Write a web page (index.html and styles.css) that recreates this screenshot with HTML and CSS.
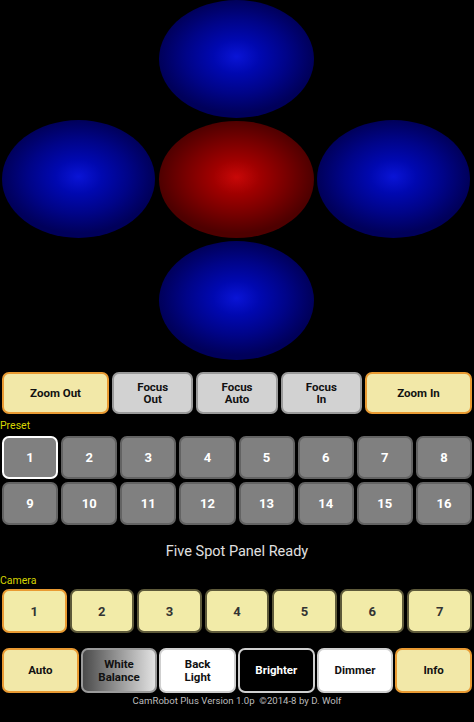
FILE: index.html
```html
<!DOCTYPE html>
<html>
<head>
<meta charset="utf-8">
<link rel="stylesheet" href="styles.css">
</head>
<body>
<div class="app">
  <div class="pad">
    <div class="spot blue top"></div>
    <div class="spot blue left"></div>
    <div class="spot red center"></div>
    <div class="spot blue right"></div>
    <div class="spot blue bottom"></div>
  </div>

  <div class="lens-row">
    <div class="btn yellow w4">Zoom Out</div>
    <div class="btn grey w3">Focus<br>Out</div>
    <div class="btn grey w3">Focus<br>Auto</div>
    <div class="btn grey w3">Focus<br>In</div>
    <div class="btn yellow w4">Zoom In</div>
  </div>

  <div class="label">Preset</div>
  <div class="preset-grid">
    <div class="btn preset sel">1</div>
    <div class="btn preset">2</div>
    <div class="btn preset">3</div>
    <div class="btn preset">4</div>
    <div class="btn preset">5</div>
    <div class="btn preset">6</div>
    <div class="btn preset">7</div>
    <div class="btn preset">8</div>
    <div class="btn preset">9</div>
    <div class="btn preset">10</div>
    <div class="btn preset">11</div>
    <div class="btn preset">12</div>
    <div class="btn preset">13</div>
    <div class="btn preset">14</div>
    <div class="btn preset">15</div>
    <div class="btn preset">16</div>
  </div>

  <div class="status">Five Spot Panel Ready</div>

  <div class="label cam-label">Camera</div>
  <div class="camera-grid">
    <div class="btn cam sel">1</div>
    <div class="btn cam">2</div>
    <div class="btn cam">3</div>
    <div class="btn cam">4</div>
    <div class="btn cam">5</div>
    <div class="btn cam">6</div>
    <div class="btn cam">7</div>
  </div>

  <div class="image-grid">
    <div class="btn yellow">Auto</div>
    <div class="btn wb">White<br>Balance</div>
    <div class="btn white">Back<br>Light</div>
    <div class="btn black">Brighter</div>
    <div class="btn white">Dimmer</div>
    <div class="btn yellow">Info</div>
  </div>

  <div class="footer">CamRobot Plus Version 1.0p&nbsp; ©2014-8 by D. Wolf</div>
</div>
</body>
</html>
```

FILE: styles.css
```css
html, body {
  margin: 0;
  padding: 0;
  background: #000;
}
body {
  font-family: Roboto, "Liberation Sans", sans-serif;
  width: 474px;
  height: 722px;
  overflow: hidden;
}
.app {
  display: flex;
  flex-direction: column;
}
.pad {
  display: grid;
  grid-template-columns: 158px 158px 158px;
  grid-template-rows: 120px 120px 120px;
  height: 360px;
}
.spot {
  margin: 0 2px 2px 1px;
  border-radius: 50%;
}
.blue {
  background: radial-gradient(ellipse closest-side at 50% 48%, #0a14d6 0%, #0008b0 30%, #000488 65%, #00005a 100%);
}
.red {
  background: radial-gradient(ellipse closest-side at 50% 48%, #c80808 0%, #a00000 30%, #780000 65%, #4e0000 100%);
}
.top { grid-column: 2; grid-row: 1; }
.left { grid-column: 1; grid-row: 2; margin-left: 2px; margin-right: 3px; }
.center { grid-column: 2; grid-row: 2; margin-top: 1px; }
.right { grid-column: 3; grid-row: 2; margin-left: 1px; margin-right: 4px; }
.bottom { grid-column: 2; grid-row: 3; margin-top: 1px; margin-bottom: 0; }

.btn {
  box-sizing: border-box;
  display: flex;
  align-items: center;
  justify-content: center;
  text-align: center;
  font-weight: 700;
  border-radius: 7px;
  border: 2px solid #999;
}
.lens-row {
  display: flex;
  gap: 3px;
  padding: 0 2px;
  margin-top: 12px;
  height: 42px;
}
.lens-row .btn {
  font-size: 11.5px;
  line-height: 12.5px;
}
.w4 { flex: 4 1 0; }
.w3 { flex: 3 1 0; }
.yellow {
  background: #f2e8a8;
  border-color: #e99a32;
  color: #111;
}
.grey {
  background: #d2d2d2;
  border-color: #9a9a9a;
  color: #111;
}
.label {
  color: #d6d600;
  font-size: 10.5px;
  line-height: 12px;
  margin-top: 6px;
  height: 14px;
}
.preset-grid {
  display: grid;
  grid-template-columns: repeat(8, 1fr);
  grid-template-rows: 43px 43px;
  gap: 3px;
  padding: 0 2px;
  margin-top: 2px;
}
.preset {
  background: #808080;
  border-color: #636363;
  color: #fff;
  font-size: 13px;
}
.preset.sel {
  border-color: #fff;
}
.status {
  color: #e0e0e0;
  font-size: 14.5px;
  text-align: center;
  margin-top: 18px;
  line-height: 18px;
}
.cam-label {
  margin-top: 14px;
}
.camera-grid {
  display: grid;
  grid-template-columns: repeat(7, 1fr);
  gap: 3px;
  padding: 0 2px;
  height: 44px;
}
.cam {
  background: #f2eba8;
  border-color: #5e5a3a;
  color: #333;
  font-size: 13px;
}
.cam.sel {
  border-color: #e99a32;
}
.image-grid {
  display: grid;
  grid-template-columns: repeat(6, 1fr);
  gap: 2px;
  padding: 0 2px;
  height: 45px;
  margin-top: 15px;
}
.image-grid .btn {
  font-size: 11.5px;
  line-height: 12.5px;
}
.wb {
  background: linear-gradient(to right, #4a4a4a 0%, #909090 45%, #e2e2e2 100%);
  border-color: #9a9a9a;
  color: #111;
}
.white {
  background: #fff;
  border-color: #cfcfcf;
  color: #111;
}
.black {
  background: #000;
  border-color: #cfcfcf;
  color: #fff;
}
.footer {
  color: #bdbdbd;
  font-size: 9.6px;
  text-align: center;
  line-height: 12px;
  margin-top: 2px;
}
```
